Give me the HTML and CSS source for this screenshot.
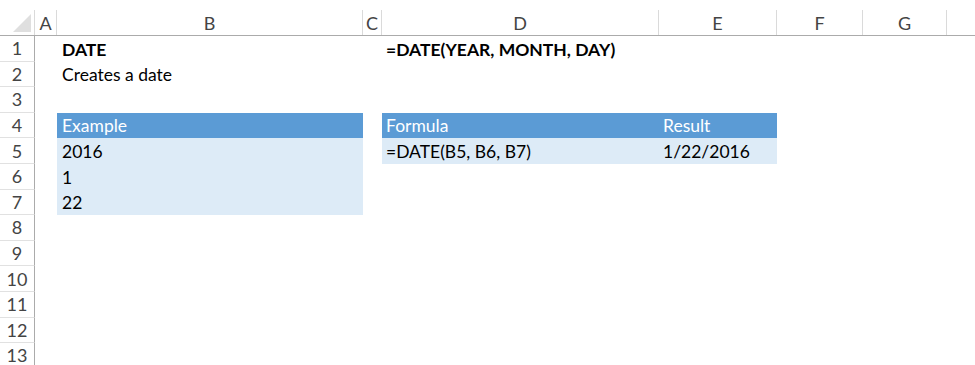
FILE: index.html
```html
<!DOCTYPE html>
<html lang="en">
<head>
  <meta charset="UTF-8">
  <title>DATE function</title>
  <link rel="stylesheet" href="styles.css">
</head>
<body>
  <div class="sheet">
    <div class="row head">
      <div class="corner"><span class="tri"></span></div>
      <div class="ch">A</div>
      <div class="ch">B</div>
      <div class="ch">C</div>
      <div class="ch">D</div>
      <div class="ch">E</div>
      <div class="ch">F</div>
      <div class="ch">G</div>
      <div class="ch last"></div>
    </div>

    <div class="row">
      <div class="rh">1</div>
      <div class="cell c-b bold">DATE</div>
      <div class="cell c-d bold">=DATE(YEAR, MONTH, DAY)</div>
    </div>
    <div class="row">
      <div class="rh">2</div>
      <div class="cell c-b">Creates a date</div>
    </div>
    <div class="row">
      <div class="rh">3</div>
    </div>
    <div class="row">
      <div class="rh">4</div>
      <div class="cell c-b th">Example</div>
      <div class="cell c-d th">Formula</div>
      <div class="cell c-e th">Result</div>
    </div>
    <div class="row">
      <div class="rh">5</div>
      <div class="cell c-b td">2016</div>
      <div class="cell c-d td">=DATE(B5, B6, B7)</div>
      <div class="cell c-e td">1/22/2016</div>
    </div>
    <div class="row">
      <div class="rh">6</div>
      <div class="cell c-b td">1</div>
    </div>
    <div class="row">
      <div class="rh">7</div>
      <div class="cell c-b td">22</div>
    </div>
    <div class="row"><div class="rh">8</div></div>
    <div class="row"><div class="rh">9</div></div>
    <div class="row"><div class="rh">10</div></div>
    <div class="row"><div class="rh">11</div></div>
    <div class="row"><div class="rh">12</div></div>
    <div class="row"><div class="rh">13</div></div>
  </div>
</body>
</html>
```

FILE: styles.css
```css
html, body {
  margin: 0;
  padding: 0;
  background: #fff;
  overflow: hidden;
}
body {
  font-family: Lato, 'Liberation Sans', sans-serif;
  color: #000;
  font-size: 17.5px;
}
.sheet {
  padding-top: 10px;
}
.row {
  display: grid;
  grid-template-columns: 35px 22px 306px 19px 277px 118px 86px 84px 1fr;
  height: 25.6px;
}
.row.head {
  height: 26px;
  box-sizing: border-box;
  border-bottom: 1px solid #ababab;
}
.corner {
  position: relative;
  border-right: 1px solid #dadada;
}
.tri {
  position: absolute;
  right: 3px;
  bottom: 3px;
  width: 0;
  height: 0;
  border-left: 18px solid transparent;
  border-bottom: 18px solid #dfdfdf;
}
.ch {
  display: flex;
  align-items: center;
  justify-content: center;
  border-right: 1px solid #dadada;
  color: #444;
  font-size: 18px;
}
.ch.last {
  border-right: none;
}
.rh {
  grid-column: 1;
  display: flex;
  align-items: center;
  justify-content: center;
  box-sizing: border-box;
  border-right: 1px solid #ababab;
  border-bottom: 1px solid #e1e1e1;
  color: #444;
  font-size: 18px;
}
.cell {
  display: flex;
  align-items: flex-end;
  padding: 0 0 2px 5px;
  white-space: nowrap;
  grid-row: 1;
}
.c-b { grid-column: 3; }
.c-d { grid-column: 5; padding-left: 4px; }
.c-e { grid-column: 6; padding-left: 4px; }
.bold {
  font-weight: bold;
}
.th {
  background: #5b9bd5;
  color: #fff;
}
.td {
  background: #ddebf7;
}
```
